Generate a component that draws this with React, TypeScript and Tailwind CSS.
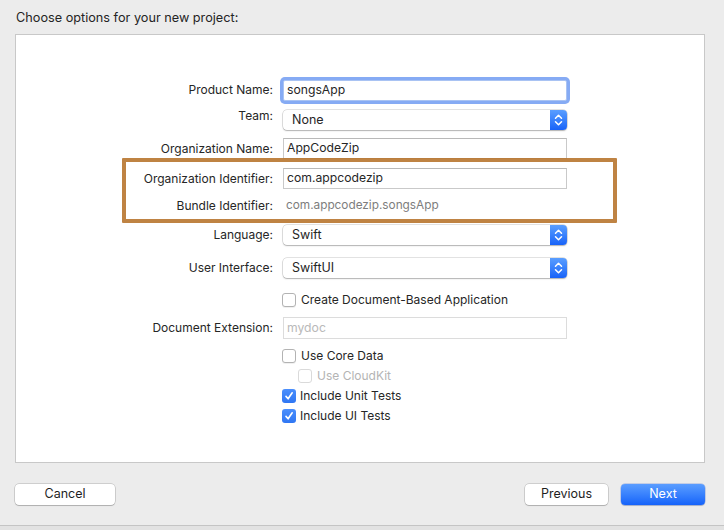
import React from "react";

function Chevrons() {
  return (
    <svg width="17" height="20" viewBox="0 0 17 20" fill="none">
      <path d="M5.5 8.2 L8.5 5.2 L11.5 8.2" stroke="white" strokeWidth="1.5" strokeLinecap="round" strokeLinejoin="round" />
      <path d="M5.5 11.8 L8.5 14.8 L11.5 11.8" stroke="white" strokeWidth="1.5" strokeLinecap="round" strokeLinejoin="round" />
    </svg>
  );
}

function Popup({ value }: { value: string }) {
  return (
    <div className="flex h-[20px] w-[284px] items-center rounded-[4px] bg-white shadow-[0_0_0_0.5px_rgba(0,0,0,0.22),0_1px_1.5px_rgba(0,0,0,0.22)]">
      <span className="pl-[9px] text-[12.5px] text-[#262626]">{value}</span>
      <div className="ml-auto flex h-[20px] w-[17px] items-center justify-center rounded-r-[4px] bg-gradient-to-b from-[#5a9eff] to-[#1862f8]">
        <Chevrons />
      </div>
    </div>
  );
}

function Field({ value, focus, h = 21, placeholder }: { value?: string; focus?: boolean; h?: number; placeholder?: string }) {
  return (
    <div
      className={
        focus
          ? "flex h-[21px] w-[284px] items-center rounded-[2px] border border-[#a9c3f3] bg-white pl-[3px] shadow-[0_0_0_3px_#86abf4]"
          : placeholder
          ? "flex h-[22px] w-[284px] items-center border border-[#dcdcdc] bg-white pl-[3px]"
          : "flex h-[21px] w-[284px] items-center border border-[#c9c9c9] border-t-[#b9b9b9] bg-white pl-[3px]"
      }
      style={{ height: h }}
    >
      {value ? (
        <span className="text-[12.2px] text-[#262626]">{value}</span>
      ) : (
        <span className="text-[12.2px] text-[#b9b9b9]">{placeholder}</span>
      )}
    </div>
  );
}

function Check({ checked, disabled }: { checked?: boolean; disabled?: boolean }) {
  if (checked) {
    return (
      <div className="flex h-[14px] w-[14px] items-center justify-center rounded-[3px] bg-gradient-to-b from-[#4b8ffc] to-[#2f76f3]">
        <svg width="10" height="10" viewBox="0 0 10 10" fill="none">
          <path d="M2 5.4 L4.1 7.8 L8.2 1.8" stroke="white" strokeWidth="1.6" strokeLinecap="round" strokeLinejoin="round" />
        </svg>
      </div>
    );
  }
  return (
    <div
      className={
        disabled
          ? "h-[14px] w-[14px] rounded-[3px] border border-[#dadada] bg-white"
          : "h-[14px] w-[14px] rounded-[3px] border border-[#b3b3b3] bg-white shadow-[0_1px_0.5px_rgba(0,0,0,0.06)]"
      }
    />
  );
}

function Label({ children, className = "" }: { children: React.ReactNode; className?: string }) {
  return <div className={"w-[257px] text-right text-[12px] text-[#262626] " + className}>{children}</div>;
}

export default function App() {
  return (
    <div className="flex h-[530px] w-[724px] flex-col overflow-hidden bg-[#ececec] font-['Inter',sans-serif] text-[#262626]">
      <div className="h-[34px] pl-[16px] pt-[9px] text-[12.7px] leading-[17px] text-[#242424]">
        Choose options for your new project:
      </div>

      <div className="relative ml-[15px] flex h-[429px] w-[690px] flex-col border border-[#c8c8c8] bg-white">
        <div className="mt-[42px] flex h-[27px] items-center">
          <Label className="pb-[1px]">Product Name:</Label>
          <div className="ml-[10px]">
            <Field value="songsApp" focus />
          </div>
        </div>

        <div className="mt-[6px] flex h-[20px] items-center">
          <Label className="pb-[8px]">Team:</Label>
          <div className="ml-[10px]">
            <Popup value="None" />
          </div>
        </div>

        <div className="mt-[8px] flex h-[21px] items-center">
          <Label>Organization Name:</Label>
          <div className="ml-[10px]">
            <Field value="AppCodeZip" />
          </div>
        </div>

        <div className="mt-[9px] flex h-[21px] items-center">
          <Label>Organization Identifier:</Label>
          <div className="ml-[10px]">
            <Field value="com.appcodezip" />
          </div>
        </div>

        <div className="mt-[7px] flex h-[20px] items-center">
          <Label>Bundle Identifier:</Label>
          <div className="ml-[10px] pl-[3px] text-[11.8px] text-[#7d7d7d]">com.appcodezip.songsApp</div>
        </div>

        <div className="mt-[9px] flex h-[20px] items-center">
          <Label>Language:</Label>
          <div className="ml-[10px]">
            <Popup value="Swift" />
          </div>
        </div>

        <div className="mt-[13px] flex h-[20px] items-center">
          <Label>User Interface:</Label>
          <div className="ml-[10px]">
            <Popup value="SwiftUI" />
          </div>
        </div>

        <div className="mt-[12px] flex h-[20px] items-center pl-[266px]">
          <Check />
          <span className="ml-[5px] text-[12px]">Create Document-Based Application</span>
        </div>

        <div className="mt-[7px] flex h-[22px] items-center">
          <Label>Document Extension:</Label>
          <div className="ml-[10px]">
            <Field placeholder="mydoc" h={22} />
          </div>
        </div>

        <div className="mt-[7px] flex h-[20px] items-center pl-[266px]">
          <Check />
          <span className="ml-[5px] text-[12px]">Use Core Data</span>
        </div>
        <div className="flex h-[20px] items-center pl-[282px]">
          <Check disabled />
          <span className="ml-[5px] text-[12px] text-[#b4b4b4]">Use CloudKit</span>
        </div>
        <div className="flex h-[20px] items-center pl-[266px]">
          <Check checked />
          <span className="ml-[4px] text-[12px]">Include Unit Tests</span>
        </div>
        <div className="flex h-[20px] items-center pl-[266px]">
          <Check checked />
          <span className="ml-[4px] text-[12px]">Include UI Tests</span>
        </div>

        <div className="pointer-events-none absolute left-[106px] top-[123px] h-[65px] w-[495px] rounded-[1px] border-[4px] border-[#b8762f] opacity-90" />
      </div>

      <div className="mt-[21px] flex h-[21px] items-center px-[15px]">
        <div className="flex h-[21px] w-[100px] items-center justify-center rounded-[4px] bg-white text-[12.5px] text-[#1e1e1e] shadow-[0_0_0_0.5px_rgba(0,0,0,0.25),0_1px_1px_rgba(0,0,0,0.15)]">
          Cancel
        </div>
        <div className="ml-auto flex h-[21px] w-[83px] items-center justify-center rounded-[4px] bg-white text-[12.5px] text-[#1e1e1e] shadow-[0_0_0_0.5px_rgba(0,0,0,0.25),0_1px_1px_rgba(0,0,0,0.15)]">
          Previous
        </div>
        <div className="ml-[13px] mr-[4px] flex h-[21px] w-[84px] items-center justify-center rounded-[4px] bg-gradient-to-b from-[#5a9dff] to-[#1462fa] text-[12.5px] text-white shadow-[0_0_0_0.5px_rgba(0,60,200,0.35),0_1px_1px_rgba(0,0,0,0.15)]">
          Next
        </div>
      </div>

      <div className="mt-[20px] h-[1px] bg-[#c4c4c4]" />
      <div className="flex-1 bg-[#e2e2e2]" />
    </div>
  );
}
